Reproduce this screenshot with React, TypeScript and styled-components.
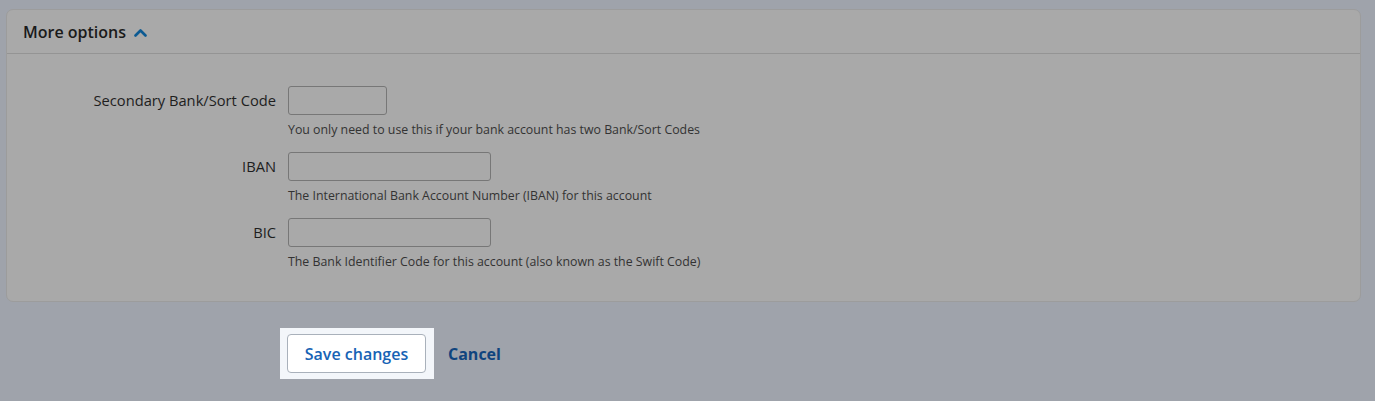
import React from "react";
import styled, { createGlobalStyle } from "styled-components";

const Global = createGlobalStyle`
  html, body { margin: 0; padding: 0; }
  body {
    background: #9fa3ab;
    font-family: "Open Sans", Lato, "Liberation Sans", sans-serif;
    color: #1e1e1e;
  }
`;

const Page = styled.div`
  padding: 9px 14px 0 6px;
  min-height: 401px;
  box-sizing: border-box;
`;

const Panel = styled.section`
  background: #a9a9a9;
  border: 1px solid #9c9c9c;
  border-radius: 7px;
`;

const PanelHeader = styled.div`
  height: 43px;
  display: flex;
  align-items: center;
  gap: 8px;
  padding-left: 16px;
  border-bottom: 1px solid #949494;
  font-size: 16px;
  font-weight: 600;
  color: #1a1a1a;
`;

const Chevron = styled.svg`
  width: 13px;
  height: 9px;
  margin-top: 1px;
`;

const PanelBody = styled.div`
  padding: 32px 0 29px;
  display: flex;
  flex-direction: column;
  gap: 12px;
`;

const Row = styled.div`
  display: grid;
  grid-template-columns: 269px auto;
  column-gap: 12px;
  align-items: start;
`;

const Label = styled.label`
  text-align: right;
  font-size: 14.7px;
  line-height: 29px;
  color: #1e1e1e;
`;

const Field = styled.div`
  display: flex;
  flex-direction: column;
  gap: 5px;
`;

const Input = styled.input<{ $w: number }>`
  width: ${(p) => p.$w}px;
  height: 29px;
  box-sizing: border-box;
  border: 1px solid #777;
  border-radius: 3px;
  background: transparent;
  font: inherit;
`;

const Help = styled.div`
  font-size: 12.35px;
  line-height: 20px;
  color: #333;
`;

const Actions = styled.div`
  display: flex;
  align-items: center;
  gap: 14px;
  margin: 26px 0 0 274px;
`;

const Highlight = styled.div`
  background: #f3f6fa;
  padding: 6px 8px 6px 7px;
`;

const SaveButton = styled.button`
  width: 139px;
  height: 39px;
  background: #fff;
  border: 1px solid #a9b1bb;
  border-radius: 4px;
  color: #1763b5;
  font-family: inherit;
  font-size: 16px;
  font-weight: 600;
`;

const CancelLink = styled.a`
  color: #0f447e;
  font-size: 16px;
  font-weight: 700;
  text-decoration: none;
`;

const fields = [
  { label: "Secondary Bank/Sort Code", w: 99, help: "You only need to use this if your bank account has two Bank/Sort Codes" },
  { label: "IBAN", w: 203, help: "The International Bank Account Number (IBAN) for this account" },
  { label: "BIC", w: 203, help: "The Bank Identifier Code for this account (also known as the Swift Code)" },
];

export default function App() {
  return (
    <Page>
      <Global />
      <Panel>
        <PanelHeader>
          More options
          <Chevron viewBox="0 0 13 9">
            <path d="M1.5 7.5 L6.5 2.5 L11.5 7.5" fill="none" stroke="#0c5a92" strokeWidth="2.6" strokeLinecap="round" strokeLinejoin="round" />
          </Chevron>
        </PanelHeader>
        <PanelBody>
          {fields.map((f) => (
            <Row key={f.label}>
              <Label>{f.label}</Label>
              <Field>
                <Input $w={f.w} />
                <Help>{f.help}</Help>
              </Field>
            </Row>
          ))}
        </PanelBody>
      </Panel>
      <Actions>
        <Highlight>
          <SaveButton>Save changes</SaveButton>
        </Highlight>
        <CancelLink href="#">Cancel</CancelLink>
      </Actions>
    </Page>
  );
}
